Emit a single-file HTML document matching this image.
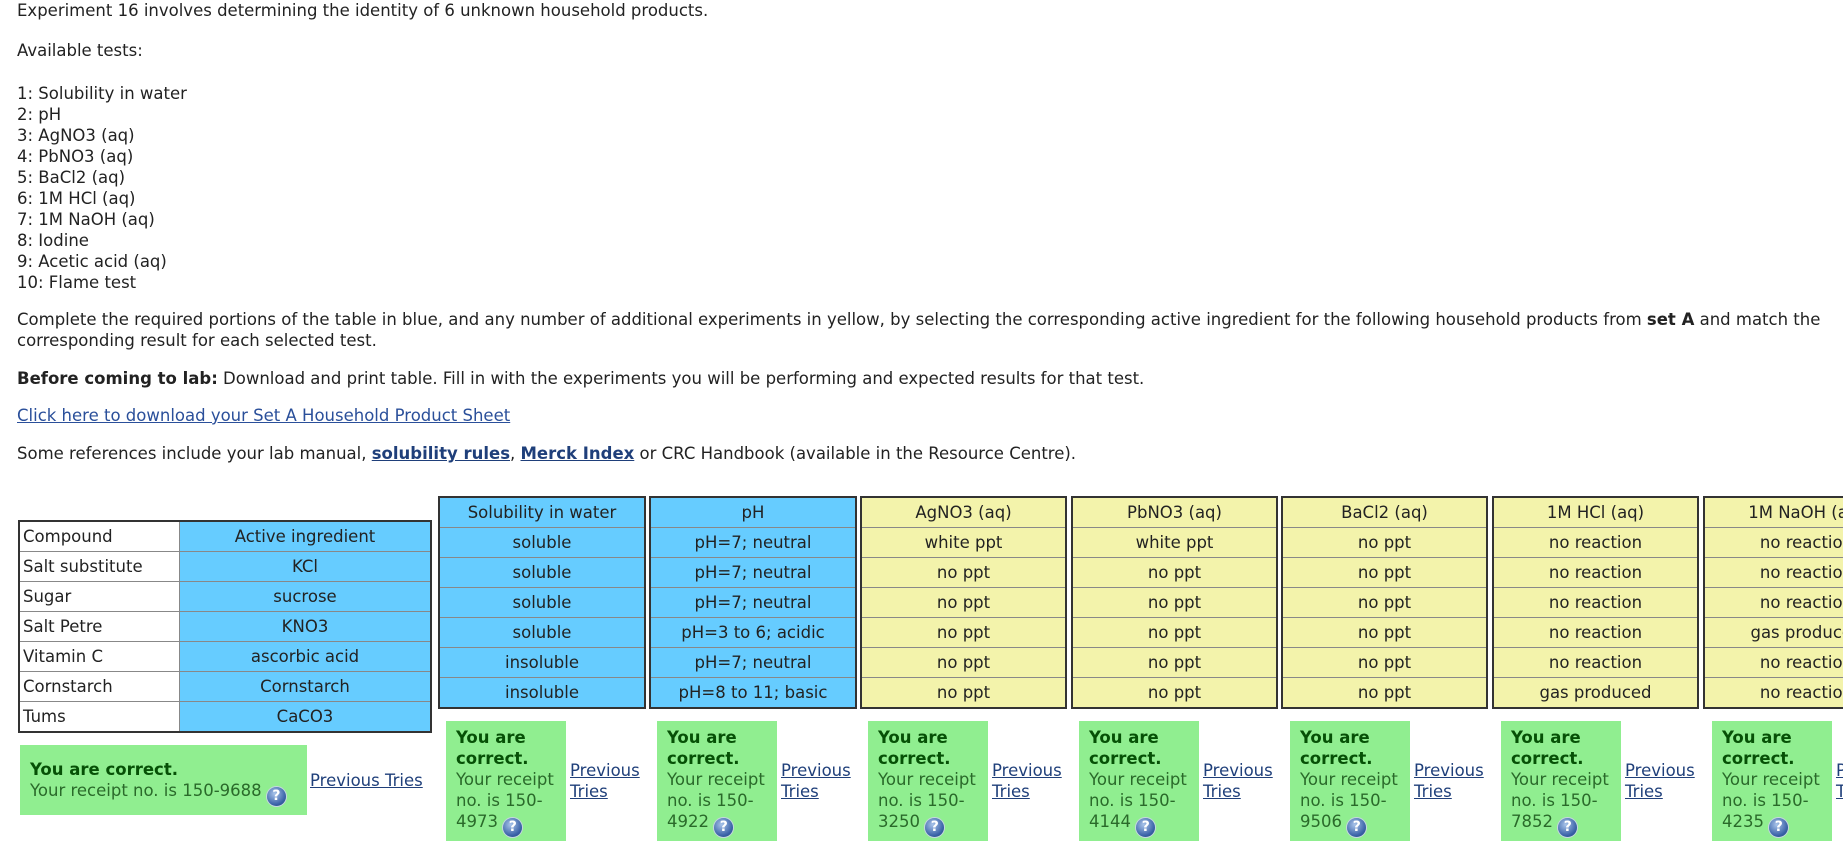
<!DOCTYPE html>
<html><head><meta charset="utf-8"><style>
html,body{margin:0;padding:0;width:1843px;height:851px;overflow:hidden;background:#fff}
body{font-family:"DejaVu Sans",Verdana,sans-serif;font-size:16.5px;color:#222;position:relative}
.t{position:absolute;left:17px;white-space:nowrap;line-height:21px}
a{color:#1f3f7a;text-decoration:underline}
table{border-collapse:collapse;position:absolute;font-size:16.5px}
td{height:29px;padding:0 3px;border:1px solid #888;text-align:center;line-height:20px;white-space:nowrap;overflow:hidden}
.bl{background:#66ccff}.ye{background:#f3f3ab}
.box{position:absolute;background:#90ee90;color:#2a6a2a;line-height:21px;padding:6px 10px 6px 10px;box-sizing:border-box}
.box b{color:#065006}
.q{display:inline-block;width:19px;height:19px;border-radius:50%;background:radial-gradient(circle at 40% 35%,#a9c4ea,#3a62a8 65%,#1c3b78);color:#fff;font-size:14px;font-weight:bold;line-height:19px;text-align:center;vertical-align:-4px;box-shadow:0 0 0 1px #c8d4e4}
.pt{position:absolute;line-height:21px}
</style></head><body>
<div class="t" style="top:0">Experiment 16 involves determining the identity of 6 unknown household products.</div>
<div class="t" style="top:40px">Available tests:</div>
<div class="t" style="top:83px">1: Solubility in water<br>2: pH<br>3: AgNO3 (aq)<br>4: PbNO3 (aq)<br>5: BaCl2 (aq)<br>6: 1M HCl (aq)<br>7: 1M NaOH (aq)<br>8: Iodine<br>9: Acetic acid (aq)<br>10: Flame test</div>
<div class="t" style="top:309px">Complete the required portions of the table in blue, and any number of additional experiments in yellow, by selecting the corresponding active ingredient for the following household products from <b>set A</b> and match the<br>corresponding result for each selected test.</div>
<div class="t" style="top:368px"><b>Before coming to lab:</b> Download and print table. Fill in with the experiments you will be performing and expected results for that test.</div>
<div class="t" style="top:405px"><a style="color:#2a4f9a">Click here to download your Set A Household Product Sheet</a></div>
<div class="t" style="top:443px">Some references include your lab manual, <a><b>solubility rules</b></a>, <a><b>Merck Index</b></a> or CRC Handbook (available in the Resource Centre).</div>

<table style="left:18px;top:520px;width:414px;border:2px solid #333">
<tr><td style="text-align:left;width:153px">Compound</td><td class="bl">Active ingredient</td></tr>
<tr><td style="text-align:left">Salt substitute</td><td class="bl">KCl</td></tr>
<tr><td style="text-align:left">Sugar</td><td class="bl">sucrose</td></tr>
<tr><td style="text-align:left">Salt Petre</td><td class="bl">KNO3</td></tr>
<tr><td style="text-align:left">Vitamin C</td><td class="bl">ascorbic acid</td></tr>
<tr><td style="text-align:left">Cornstarch</td><td class="bl">Cornstarch</td></tr>
<tr><td style="text-align:left">Tums</td><td class="bl">CaCO3</td></tr>
</table>

<table style="left:438px;top:496px;width:208px;border:2px solid #333" class="bl"><tr><td>Solubility in water</td></tr><tr><td>soluble</td></tr><tr><td>soluble</td></tr><tr><td>soluble</td></tr><tr><td>soluble</td></tr><tr><td>insoluble</td></tr><tr><td>insoluble</td></tr></table>
<table style="left:649px;top:496px;width:208px;border:2px solid #333" class="bl"><tr><td>pH</td></tr><tr><td>pH=7; neutral</td></tr><tr><td>pH=7; neutral</td></tr><tr><td>pH=7; neutral</td></tr><tr><td>pH=3 to 6; acidic</td></tr><tr><td>pH=7; neutral</td></tr><tr><td>pH=8 to 11; basic</td></tr></table>
<table style="left:860px;top:496px;width:207px;border:2px solid #333" class="ye"><tr><td>AgNO3 (aq)</td></tr><tr><td>white ppt</td></tr><tr><td>no ppt</td></tr><tr><td>no ppt</td></tr><tr><td>no ppt</td></tr><tr><td>no ppt</td></tr><tr><td>no ppt</td></tr></table>
<table style="left:1071px;top:496px;width:207px;border:2px solid #333" class="ye"><tr><td>PbNO3 (aq)</td></tr><tr><td>white ppt</td></tr><tr><td>no ppt</td></tr><tr><td>no ppt</td></tr><tr><td>no ppt</td></tr><tr><td>no ppt</td></tr><tr><td>no ppt</td></tr></table>
<table style="left:1281px;top:496px;width:207px;border:2px solid #333" class="ye"><tr><td>BaCl2 (aq)</td></tr><tr><td>no ppt</td></tr><tr><td>no ppt</td></tr><tr><td>no ppt</td></tr><tr><td>no ppt</td></tr><tr><td>no ppt</td></tr><tr><td>no ppt</td></tr></table>
<table style="left:1492px;top:496px;width:207px;border:2px solid #333" class="ye"><tr><td>1M HCl (aq)</td></tr><tr><td>no reaction</td></tr><tr><td>no reaction</td></tr><tr><td>no reaction</td></tr><tr><td>no reaction</td></tr><tr><td>no reaction</td></tr><tr><td>gas produced</td></tr></table>
<table style="left:1703px;top:496px;width:207px;border:2px solid #333" class="ye"><tr><td>1M NaOH (aq)</td></tr><tr><td>no reaction</td></tr><tr><td>no reaction</td></tr><tr><td>no reaction</td></tr><tr><td>gas produced</td></tr><tr><td>no reaction</td></tr><tr><td>no reaction</td></tr></table>

<div class="box" style="left:20px;top:745px;width:287px;height:70px;padding-top:14px"><b>You are correct.</b><br>Your receipt no. is 150-9688 <span class="q">?</span></div>
<div class="pt" style="left:310px;top:770px"><a>Previous Tries</a></div>

<div class="box" style="left:446px;top:721px;width:120px;height:120px"><b>You are correct.</b><br>Your receipt no. is 150-4973 <span class="q">?</span></div>
<div class="pt" style="left:570px;top:760px"><a>Previous<br>Tries</a></div>
<div class="box" style="left:657px;top:721px;width:120px;height:120px"><b>You are correct.</b><br>Your receipt no. is 150-4922 <span class="q">?</span></div>
<div class="pt" style="left:781px;top:760px"><a>Previous<br>Tries</a></div>
<div class="box" style="left:868px;top:721px;width:120px;height:120px"><b>You are correct.</b><br>Your receipt no. is 150-3250 <span class="q">?</span></div>
<div class="pt" style="left:992px;top:760px"><a>Previous<br>Tries</a></div>
<div class="box" style="left:1079px;top:721px;width:120px;height:120px"><b>You are correct.</b><br>Your receipt no. is 150-4144 <span class="q">?</span></div>
<div class="pt" style="left:1203px;top:760px"><a>Previous<br>Tries</a></div>
<div class="box" style="left:1290px;top:721px;width:120px;height:120px"><b>You are correct.</b><br>Your receipt no. is 150-9506 <span class="q">?</span></div>
<div class="pt" style="left:1414px;top:760px"><a>Previous<br>Tries</a></div>
<div class="box" style="left:1501px;top:721px;width:120px;height:120px"><b>You are correct.</b><br>Your receipt no. is 150-7852 <span class="q">?</span></div>
<div class="pt" style="left:1625px;top:760px"><a>Previous<br>Tries</a></div>
<div class="box" style="left:1712px;top:721px;width:120px;height:120px"><b>You are correct.</b><br>Your receipt no. is 150-4235 <span class="q">?</span></div>
<div class="pt" style="left:1836px;top:760px"><a>Previous<br>Tries</a></div>
</body></html>
